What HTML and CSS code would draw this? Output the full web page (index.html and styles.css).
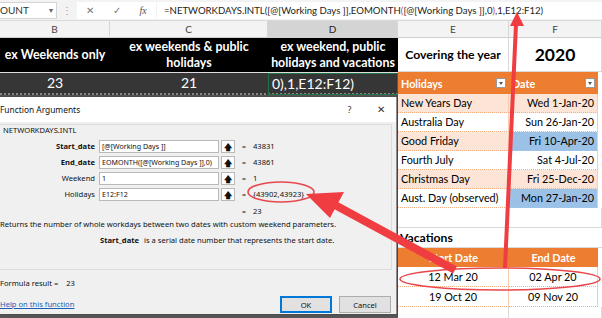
FILE: index.html
```html
<!DOCTYPE html>
<html lang="en">

<head>
    <meta charset="UTF-8">
    <title>NETWORKDAYS.INTL</title>
    <link rel="stylesheet" href="styles.css">
</head>

<body>

    <div class="fbar">
        <div class="namebox">OUNT<span class="caret">&#9662;</span></div>
        <span class="grip">&#8942;</span>
        <div class="fbtns">
            <span>&#10005;</span>
            <span>&#10003;</span>
            <span class="fx">fx</span>
        </div>
        <div class="formula">=NETWORKDAYS.INTL([@[Working Days ]],EOMONTH<span class="r">(</span>[@[Working Days ]],0<span class="r">)</span>,1,E12:F12)</div>
    </div>

    <div class="colheads">
        <div>B</div>
        <div>C</div>
        <div class="sel">D</div>
        <div>E</div>
        <div>F</div>
    </div>

    <div class="sheet">
        <!-- colonnes B a D + boite de dialogue -->
        <div class="left">
            <div class="hrow">
                <div class="c-b">ex Weekends only</div>
                <div class="c-c">ex weekends &amp; public holidays</div>
                <div class="c-d">ex weekend, public holidays and vacations</div>
            </div>
            <div class="drow">
                <div class="c-b">23</div>
                <div class="c-c">21</div>
                <div class="c-d edit">0),1,E12:F12)</div>
            </div>

            <div class="dialog">
                <div class="dlg-title">
                    <span>Function Arguments</span>
                    <span class="dlg-ctrl">?</span>
                    <span class="dlg-ctrl x">&#10005;</span>
                </div>
                <div class="dlg-body">
                    <div class="group">
                        <div class="group-label">NETWORKDAYS.INTL</div>
                        <div class="args">
                            <div class="arg">
                                <label class="b">Start_date</label>
                                <div class="inp">[@[Working Days ]]</div>
                                <span class="pick">&#129093;</span>
                                <span class="eq">=</span>
                                <span class="val">43831</span>
                            </div>
                            <div class="arg">
                                <label class="b">End_date</label>
                                <div class="inp">EOMONTH([@[Working Days ]],0)</div>
                                <span class="pick">&#129093;</span>
                                <span class="eq">=</span>
                                <span class="val">43861</span>
                            </div>
                            <div class="arg">
                                <label>Weekend</label>
                                <div class="inp">1</div>
                                <span class="pick">&#129093;</span>
                                <span class="eq">=</span>
                                <span class="val">1</span>
                            </div>
                            <div class="arg">
                                <label>Holidays</label>
                                <div class="inp">E12:F12</div>
                                <span class="pick">&#129093;</span>
                                <span class="eq">=</span>
                                <span class="val">{43902,43923}</span>
                            </div>
                            <div class="arg total">
                                <label></label>
                                <div></div>
                                <span></span>
                                <span class="eq">=</span>
                                <span class="val">23</span>
                            </div>
                        </div>
                        <p class="desc">Returns the number of whole workdays between two dates with custom weekend parameters.</p>
                        <p class="argdesc"><b>Start_date</b><span>is a serial date number that represents the start date.</span></p>
                    </div>
                    <div class="result">Formula result =<span>23</span></div>
                    <div class="dlg-foot">
                        <a href="#">Help on this function</a>
                        <div class="btns">
                            <button class="ok">OK</button>
                            <button>Cancel</button>
                        </div>
                    </div>
                </div>
            </div>
        </div>

        <!-- colonnes E et F -->
        <div class="right">
            <div class="cover">
                <div>Covering the year</div>
                <div class="year">2020</div>
            </div>

            <div class="tbl">
                <div class="th"><span>Holidays</span><i class="filt"></i></div>
                <div class="th"><span>Date</span><i class="filt"></i></div>

                <div class="td alt">New Years Day</div>
                <div class="td alt num">Wed 1-Jan-20</div>
                <div class="td">Australia Day</div>
                <div class="td num">Sun 26-Jan-20</div>
                <div class="td alt">Good Friday</div>
                <div class="td blue num">Fri 10-Apr-20</div>
                <div class="td">Fourth July</div>
                <div class="td num">Sat 4-Jul-20</div>
                <div class="td alt">Christmas Day</div>
                <div class="td alt num">Fri 25-Dec-20</div>
                <div class="td">Aust. Day (observed)</div>
                <div class="td blue num">Mon 27-Jan-20</div>
            </div>

            <div class="blank"><div></div><div></div></div>
            <div class="vac-title">Vacations</div>

            <div class="tbl vac">
                <div class="th ctr">Start Date</div>
                <div class="th ctr">End Date</div>
                <div class="td ctr">12 Mar 20</div>
                <div class="td ctr">02 Apr 20</div>
                <div class="td ctr">19 Oct 20</div>
                <div class="td ctr">09 Nov 20</div>
            </div>
            <div class="blank"><div></div><div></div></div>
        </div>
    </div>

    <!-- annotations rouges par dessus la capture -->
    <svg class="marks" width="602" height="318" viewBox="0 0 602 318">
        <ellipse cx="281" cy="192" rx="33" ry="10" fill="none" stroke="#e8474c" stroke-width="1.6"/>
        <ellipse cx="500" cy="279" rx="100" ry="11" fill="none" stroke="#e8474c" stroke-width="1.6"/>
        <line x1="455" y1="270" x2="335" y2="205" stroke="#ef3d42" stroke-width="8"/>
        <polygon points="306,194 344,192 330,218" fill="#ef3d42"/>
        <line x1="505" y1="268" x2="516" y2="24" stroke="#ef3d42" stroke-width="4"/>
        <polygon points="517,12 524,26 510,26" fill="#ef3d42"/>
    </svg>

</body>

</html>
```

FILE: styles.css
```css
* {
    margin: 0;
    padding: 0;
    box-sizing: border-box;
}

body {
    width: 602px;
    height: 318px;
    overflow: hidden;
    position: relative;
    font-family: Lato, "Open Sans", sans-serif;
    background-color: #fff;
    color: #000;
}

/* barre de formule */
.fbar {
    height: 21px;
    display: flex;
    align-items: center;
    background-color: #f3f3f3;
    border-bottom: 1px solid #dadada;
}

.namebox {
    width: 57px;
    height: 17px;
    background-color: #fff;
    border: 1px solid #d4d4d4;
    border-left: none;
    display: flex;
    align-items: center;
    justify-content: space-between;
    padding-right: 3px;
    font-size: 10px;
    color: #333;
}

.namebox .caret {
    font-size: 8px;
    color: #666;
}

.grip {
    width: 20px;
    text-align: center;
    font-size: 10px;
    color: #999;
}

.fbtns {
    width: 79px;
    height: 17px;
    display: flex;
    align-items: center;
    justify-content: space-around;
    background-color: #fff;
    font-size: 10px;
    color: #777;
}

.fbtns .fx {
    font-family: "Liberation Serif", serif;
    font-style: italic;
    color: #555;
}

.formula {
    flex: 1;
    height: 17px;
    margin-left: 1px;
    padding-left: 7px;
    background-color: #fff;
    font-size: 9.6px;
    line-height: 17px;
    white-space: nowrap;
    color: #222;
}

.formula .r {
    color: #e03c3c;
}

/* en-tetes de colonnes */
.colheads {
    height: 17px;
    display: grid;
    grid-template-columns: 110px 158px 130px 111px 93px;
    background-color: #f3f3f3;
    border-bottom: 1px solid #cfcfcf;
}

.colheads div {
    text-align: center;
    font-size: 10px;
    line-height: 17px;
    color: #444;
    border-right: 1px solid #d6d6d6;
}

.colheads .sel {
    background-color: #d4d4d4;
    border-bottom: 2px solid #217346;
    color: #222;
}

.sheet {
    display: grid;
    grid-template-columns: 398px 204px;
    height: 280px;
}

/* partie gauche */
.left {
    background-color: #555;
}

.hrow,
.drow {
    display: grid;
    grid-template-columns: 110px 158px 130px;
}

.hrow {
    height: 34px;
    background-color: #000;
    color: #fff;
    font-weight: bold;
    font-size: 12.4px;
    line-height: 16px;
}

.hrow div {
    display: flex;
    align-items: center;
    justify-content: center;
    text-align: center;
}

.drow {
    height: 23px;
    background-color: #363636;
    color: #fff;
    font-size: 14px;
    border-top: 1px solid #ddd;
    border-bottom: 2px dotted #888;
}

.drow div {
    text-align: center;
    line-height: 20px;
}

.drow .edit {
    text-align: left;
    padding-left: 3px;
    border: 1px solid #217346;
}

/* boite de dialogue */
.dialog {
    margin-top: 2px;
    height: 217px;
    width: 397px;
    background-color: #f0f0f0;
    border-right: 1px solid #8c8c8c;
    box-shadow: 1px 0 2px rgba(0, 0, 0, 0.25);
    font-family: "Noto Sans", sans-serif;
    font-size: 7.6px;
    line-height: 11px;
    color: #111;
}

.dlg-title {
    height: 25px;
    background-color: #fff;
    display: flex;
    align-items: center;
    font-size: 8.4px;
}

.dlg-title span:first-child {
    flex: 1;
}

.dlg-ctrl {
    width: 31px;
    text-align: center;
    font-size: 9px;
    color: #333;
}

.dlg-ctrl.x {
    font-size: 10px;
}

.dlg-body {
    padding-top: 2px;
}

.group {
    height: 146px;
    border-top: 1px solid #dcdcdc;
    border-bottom: 1px solid #dcdcdc;
    border-right: 1px solid #dcdcdc;
    margin-right: 4px;
}

.group-label {
    padding-left: 3px;
    height: 11px;
}

.args {
    margin-top: 2px;
}

.arg {
    display: grid;
    grid-template-columns: 99px 120px 16px 18px auto;
    align-items: center;
    height: 16px;
}

.arg label {
    text-align: right;
    padding-right: 4px;
}

.arg label.b {
    font-weight: bold;
}

.inp {
    height: 13px;
    background-color: #fff;
    border: 1px solid #b9b9b9;
    padding-left: 2px;
    font-size: 7.1px;
    line-height: 11px;
    white-space: nowrap;
    overflow: hidden;
}

.pick {
    height: 13px;
    margin-left: 2px;
    background-color: #fdfdfd;
    border: 1px solid #b9b9b9;
    font-size: 8px;
    line-height: 11px;
    text-align: center;
    font-weight: bold;
}

.eq {
    text-align: center;
    font-size: 7px;
}

.arg.total {
    height: 18px;
}

.desc {
    margin-top: -1px;
}

.argdesc {
    margin-top: 5px;
    padding-left: 100px;
}

.argdesc span {
    margin-left: 5px;
}

.result {
    margin-top: 8px;
}

.result span {
    margin-left: 8px;
}

.dlg-foot {
    margin-top: 7px;
    display: flex;
    justify-content: space-between;
    align-items: center;
    padding-right: 5px;
}

.dlg-foot a {
    color: #1a5fb4;
    text-decoration: underline;
}

.btns {
    display: flex;
    gap: 7px;
}

.btns button {
    width: 52px;
    height: 17px;
    font-family: "Noto Sans", sans-serif;
    font-size: 7.6px;
    background-color: #e1e1e1;
    border: 1px solid #adadad;
    color: #111;
}

.btns .ok {
    border: 1px solid #0078d7;
    box-shadow: inset 0 0 0 1px #0078d7;
}

/* partie droite */
.right {
    background-color: #fff;
}

.cover {
    height: 34px;
    display: grid;
    grid-template-columns: 111px 93px;
    border-bottom: 1px solid #d9d9d9;
}

.cover div {
    display: flex;
    align-items: center;
    justify-content: center;
    font-weight: bold;
    font-size: 12.2px;
    border-right: 1px solid #d9d9d9;
}

.cover .year {
    font-size: 17.5px;
}

.tbl {
    display: grid;
    grid-template-columns: 111px 89px;
    width: 200px;
}

.tbl .th {
    height: 22px;
    background-color: #ed7d31;
    color: #fff;
    font-weight: bold;
    font-size: 10.8px;
    display: flex;
    align-items: center;
    justify-content: space-between;
    padding: 0 3px;
}

.filt {
    width: 10px;
    height: 10px;
    background-color: #fff;
    border: 1px solid #999;
    position: relative;
}

.filt::after {
    content: "";
    position: absolute;
    left: 2px;
    top: 3px;
    border-left: 2.5px solid transparent;
    border-right: 2.5px solid transparent;
    border-top: 3px solid #555;
}

.tbl .td {
    height: 19px;
    font-size: 10.8px;
    line-height: 18px;
    padding: 0 3px;
    border-bottom: 1px dotted #f4b084;
    border-right: 1px solid #f8cbad;
    white-space: nowrap;
}

.tbl .alt {
    background-color: #fce4d6;
}

.tbl .blue {
    background-color: #9bc2e6;
}

.tbl .num {
    text-align: right;
}

.tbl .ctr {
    justify-content: center;
    text-align: center;
}

.vac .th {
    height: 19px;
}

.vac .td {
    height: 20px;
    line-height: 19px;
}

.blank {
    height: 20px;
    display: grid;
    grid-template-columns: 111px 93px;
    border-bottom: 1px solid #d9d9d9;
}

.blank div {
    border-right: 1px solid #d9d9d9;
}

.vac-title {
    height: 20px;
    font-weight: bold;
    font-size: 12.2px;
    line-height: 20px;
    padding-left: 2px;
    border-bottom: 1px solid #d9d9d9;
}

/* fleches et cercles */
.marks {
    position: absolute;
    left: 0;
    top: 0;
    pointer-events: none;
}
```
